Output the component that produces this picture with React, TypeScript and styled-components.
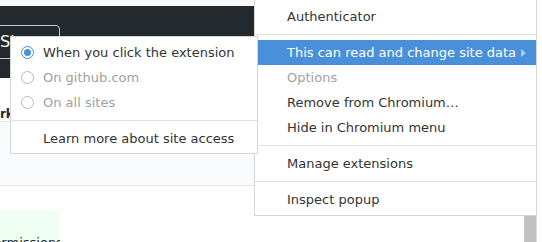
import * as React from 'react';
import styled, { createGlobalStyle } from 'styled-components';

const GlobalStyle = createGlobalStyle`
  html, body {
    margin: 0;
    padding: 0;
    background: #ffffff;
  }
  body {
    font-family: "DejaVu Sans", "Noto Sans", sans-serif;
  }
`;

const Screen = styled.div`
  position: relative;
  width: 542px;
  height: 242px;
  overflow: hidden;
  background: #ffffff;
`;

/* ---------- page behind the menus ---------- */

const Frame = styled.div`
  display: flex;
  width: 536px;
  height: 242px;
  border-right: 1px solid #dadce0;
`;

const PageBody = styled.div`
  flex: 1;
  display: flex;
  flex-direction: column;
  min-width: 0;
  overflow: hidden;

  & > * {
    flex-shrink: 0;
  }
`;

const ScrollBar = styled.div`
  width: 14px;
  display: flex;
  flex-direction: column;
  align-items: flex-end;
`;

const Thumb = styled.div`
  margin-top: 215px;
  width: 12px;
  flex: 1;
  background: #c1c1c1;
`;

const TopStrip = styled.div`
  height: 6px;
  background: #f6f8fa;
`;

const Header = styled.div`
  height: 72px;
  background: #24292e;
  display: flex;
  align-items: flex-start;
  padding-top: 19px;
  box-sizing: border-box;
`;

const HeaderButton = styled.div`
  margin-left: -14px;
  width: 74px;
  height: 34px;
  box-sizing: border-box;
  border: 1px solid rgba(255, 255, 255, 0.75);
  border-radius: 4px;
  color: #ffffff;
  font-size: 16px;
  line-height: 32px;
  padding-left: 13px;
  white-space: nowrap;
  overflow: hidden;
`;

const RepoBar = styled.div`
  height: 43px;
  display: flex;
  align-items: flex-end;
  border-bottom: 1px solid #e1e4e8;
`;

const ForkLabel = styled.span`
  margin-left: -16px;
  font-size: 12px;
  line-height: 13px;
  font-weight: bold;
  color: #24292e;
  white-space: nowrap;
`;

const GrayStrip = styled.div`
  height: 63px;
  background: #fafbfc;
  border-bottom: 1px solid #e1e4e8;
`;

const Content = styled.div`
  padding-top: 24px;
`;

const Notice = styled.div`
  width: 60px;
  height: 40px;
  background: #f0fff4;
  overflow: hidden;
  font-size: 13px;
  color: #24292e;
  padding-top: 25px;
  box-sizing: border-box;
  text-indent: -14px;
  white-space: nowrap;
`;

/* ---------- context menu (right) ---------- */

const Menu = styled.div`
  position: absolute;
  left: 254px;
  top: -1px;
  width: 283px;
  box-sizing: border-box;
  background: #ffffff;
  border: 1px solid #d6d6d6;
  padding: 4px 0 3px;
  z-index: 1;
`;

const MenuItem = styled.div<{ $active?: boolean; $disabled?: boolean }>`
  height: 25px;
  display: flex;
  align-items: center;
  padding-left: 32px;
  padding-right: 10px;
  font-size: 13px;
  background: ${(p) => (p.$active ? '#4a90d9' : 'transparent')};
  color: ${(p) => (p.$active ? '#ffffff' : p.$disabled ? '#a0a0a0' : '#333333')};
`;

const ItemLabel = styled.span`
  flex: 1;
  white-space: nowrap;
`;

const SubArrow = styled.span`
  width: 0;
  height: 0;
  border-top: 4px solid transparent;
  border-bottom: 4px solid transparent;
  border-left: 5px solid rgba(255, 255, 255, 0.55);
`;

const Separator = styled.div`
  height: 11px;
  display: flex;
  align-items: center;

  &::after {
    content: '';
    flex: 1;
    height: 1px;
    background: #e2e2e2;
  }
`;

/* ---------- site access popup (left) ---------- */

const Popup = styled.div`
  position: absolute;
  left: 10px;
  top: 36px;
  width: 248px;
  box-sizing: border-box;
  background: #ffffff;
  border: 1px solid #d6d6d6;
  padding: 3px 0 2px;
  z-index: 2;
`;

const Option = styled.div<{ $checked?: boolean }>`
  height: 25px;
  display: flex;
  align-items: center;
  gap: 9px;
  padding-left: 10px;
  font-size: 13px;
  color: ${(p) => (p.$checked ? '#333333' : '#a0a0a0')};
  white-space: nowrap;
`;

const Radio = styled.span<{ $checked?: boolean }>`
  width: 13px;
  height: 13px;
  box-sizing: border-box;
  border-radius: 50%;
  border: 1px solid ${(p) => (p.$checked ? '#4a90d9' : '#b8b8b8')};
  display: flex;
  align-items: center;
  justify-content: center;

  &::after {
    content: '';
    width: 7px;
    height: 7px;
    border-radius: 50%;
    background: ${(p) => (p.$checked ? '#4a90d9' : 'transparent')};
  }
`;

const LinkRow = styled.div`
  height: 25px;
  display: flex;
  align-items: center;
  padding-left: 32px;
  font-size: 13px;
  color: #333333;
  white-space: nowrap;
`;

const options = [
  { label: 'When you click the extension', checked: true },
  { label: 'On github.com', checked: false },
  { label: 'On all sites', checked: false },
];

export default function App() {
  return (
    <>
      <GlobalStyle />
      <Screen>
        <Frame>
          <PageBody>
            <TopStrip />
            <Header>
              <HeaderButton>Sign up</HeaderButton>
            </Header>
            <RepoBar>
              <ForkLabel>Fork</ForkLabel>
            </RepoBar>
            <GrayStrip />
            <Content>
              <Notice>Permissions</Notice>
            </Content>
          </PageBody>
          <ScrollBar>
            <Thumb />
          </ScrollBar>
        </Frame>

        <Menu>
          <MenuItem>
            <ItemLabel>Authenticator</ItemLabel>
          </MenuItem>
          <Separator />
          <MenuItem $active>
            <ItemLabel>This can read and change site data</ItemLabel>
            <SubArrow />
          </MenuItem>
          <MenuItem $disabled>
            <ItemLabel>Options</ItemLabel>
          </MenuItem>
          <MenuItem>
            <ItemLabel>Remove from Chromium…</ItemLabel>
          </MenuItem>
          <MenuItem>
            <ItemLabel>Hide in Chromium menu</ItemLabel>
          </MenuItem>
          <Separator />
          <MenuItem>
            <ItemLabel>Manage extensions</ItemLabel>
          </MenuItem>
          <Separator />
          <MenuItem>
            <ItemLabel>Inspect popup</ItemLabel>
          </MenuItem>
        </Menu>

        <Popup>
          {options.map((o) => (
            <Option key={o.label} $checked={o.checked}>
              <Radio $checked={o.checked} />
              {o.label}
            </Option>
          ))}
          <Separator />
          <LinkRow>Learn more about site access</LinkRow>
        </Popup>
      </Screen>
    </>
  );
}
